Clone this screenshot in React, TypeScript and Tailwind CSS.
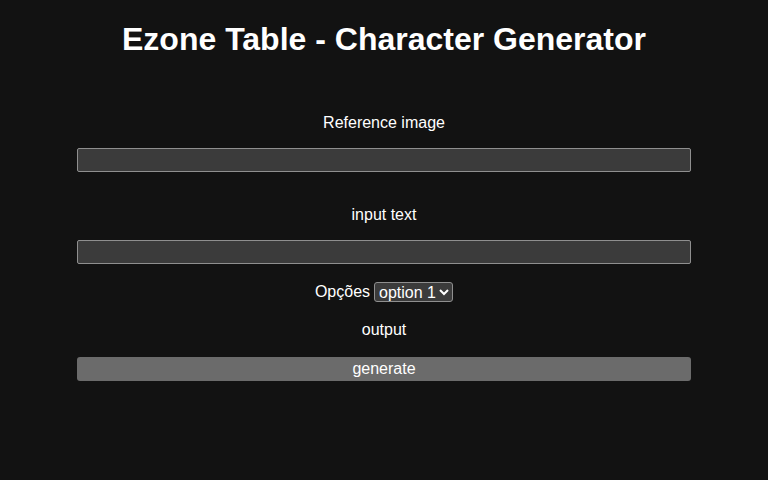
import React from "react";

export default function App() {
  return (
    <div
      className="min-h-[480px] w-full bg-[#121212] text-white flex flex-col items-center"
      style={{ fontFamily: '"Liberation Sans", Arial, sans-serif' }}
    >
      <h1 className="mt-[21px] text-[32px] leading-[37px] font-bold">
        Ezone Table - Character Generator
      </h1>
      <div className="mt-[56px] text-[16px] leading-[18px]">Reference image</div>
      <div className="mt-[16px] w-[614px] h-[24px] bg-[#3b3b3b] border border-[#8f8f8f] rounded-[2px]" />
      <div className="mt-[34px] text-[16px] leading-[18px]">input text</div>
      <div className="mt-[16px] w-[614px] h-[24px] bg-[#3b3b3b] border border-[#8f8f8f] rounded-[2px]" />
      <div className="mt-[18px] flex items-center gap-[4px] text-[16px] leading-[18px]">
        <span>Opções</span>
        <select className="scheme-dark h-[20px] w-[79px] bg-[#3b3b3b] text-white border border-[#8f8f8f] rounded-[3px] text-[16px] leading-[18px] px-0">
          <option>option 1</option>
          <option>option 2</option>
        </select>
      </div>
      <div className="mt-[19px] text-[16px] leading-[18px]">output</div>
      <button className="mt-[18px] w-[614px] h-[24px] bg-[#6b6b6b] text-white rounded-[3px] text-[16px] leading-[18px]">
        generate
      </button>
    </div>
  );
}
